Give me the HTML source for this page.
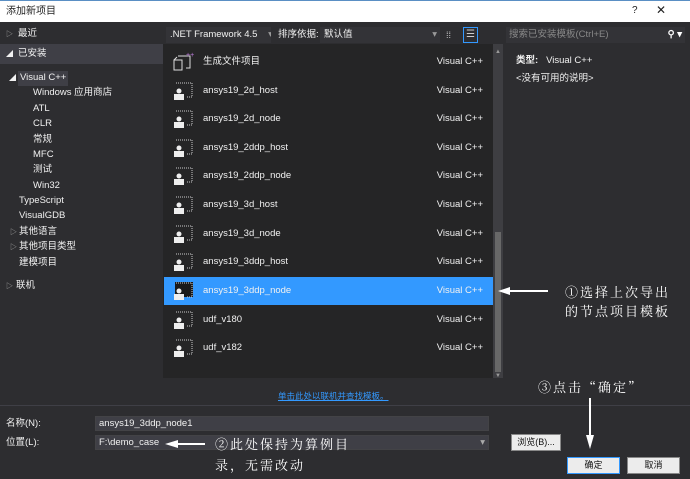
<!DOCTYPE html><html><head><meta charset="utf-8"><style>
*{margin:0;padding:0;box-sizing:border-box}
body{width:690px;height:479px;background:#2d2d30;font-family:"Liberation Sans","Noto Sans CJK SC",sans-serif;font-size:9.5px;color:#f1f1f1;position:relative;overflow:hidden;line-height:12px}
.a{position:absolute;white-space:nowrap}
.title{left:0;top:0;width:690px;height:22px;background:#fff;border-top:1px solid #5a8fc4;color:#222;font-size:10px}
.list{left:163px;top:44px;width:330px;height:334px;background:#252526}
.row{position:absolute;left:1px;width:329px;height:28px}
.row .n{position:absolute;left:39px;top:8px}
.row .t{position:absolute;right:10px;top:8px}
.ic{position:absolute;left:8px;top:4px;width:22px;height:20px}
.sel{background:#3399ff}
.ann{font-family:"Noto Serif CJK SC","Liberation Serif",serif;font-size:13px;color:#fff;letter-spacing:2px;line-height:16px}
.btn{position:absolute;background:#ececec;color:#111;text-align:center;font-size:9px;line-height:15px;border:1px solid #888}
.inp{position:absolute;background:#3f3f46;border:1px solid #434346;color:#f1f1f1;padding-left:3px;line-height:13px;overflow:hidden}
.box{height:16px;overflow:hidden;background:#333337;padding:2px 4px}
</style></head><body>
<div class="a title"><span style="position:absolute;left:6px;top:5px">添加新项目</span><span style="position:absolute;left:632px;top:4px">?</span><span style="position:absolute;left:656px;top:3px;font-size:12px">✕</span></div>

<div class="a" style="left:0;top:44px;width:163px;height:20px;background:#3f3f46"></div>
<div class="a" style="left:18px;top:71px;width:50px;height:15px;background:#3f3f46"></div>
<div class="a" style="left:6px;top:29px;color:#aaa;font-size:7px">▷</div><div class="a" style="left:18px;top:28px">最近</div>
<div class="a" style="left:6px;top:49px;font-size:7px">◢</div><div class="a" style="left:18px;top:48px">已安装</div>
<div class="a" style="left:9px;top:73px;font-size:7px">◢</div><div class="a" style="left:20px;top:72px">Visual C++</div>
<div class="a" style="left:33px;top:87px">Windows 应用商店</div>
<div class="a" style="left:33px;top:103px">ATL</div>
<div class="a" style="left:33px;top:118px">CLR</div>
<div class="a" style="left:33px;top:134px">常规</div>
<div class="a" style="left:33px;top:149px">MFC</div>
<div class="a" style="left:33px;top:164px">测试</div>
<div class="a" style="left:33px;top:180px">Win32</div>
<div class="a" style="left:19px;top:195px">TypeScript</div>
<div class="a" style="left:19px;top:210px">VisualGDB</div>
<div class="a" style="left:10px;top:227px;color:#aaa;font-size:7px">▷</div><div class="a" style="left:19px;top:226px">其他语言</div>
<div class="a" style="left:10px;top:242px;color:#aaa;font-size:7px">▷</div><div class="a" style="left:19px;top:241px">其他项目类型</div>
<div class="a" style="left:19px;top:257px">建模项目</div>
<div class="a" style="left:6px;top:281px;color:#aaa;font-size:7px">▷</div><div class="a" style="left:16px;top:280px">联机</div>

<div class="a box" style="left:166px;top:27px;width:105px">.NET Framework 4.5 <span style="color:#999;margin-left:8px">▾</span></div>
<div class="a" style="left:278px;top:29px">排序依据:</div>
<div class="a box" style="left:320px;top:27px;width:120px">默认值<span style="position:absolute;right:3px;color:#999">▾</span></div>
<div class="a" style="left:446px;top:29px;width:12px;height:12px;color:#ccc;font-size:9px">⁞⁞</div>
<div class="a" style="left:463px;top:27px;width:15px;height:16px;border:1px solid #3399ff;color:#ccc;font-size:10px;text-align:center;line-height:14px">☰</div>
<div class="a box" style="left:506px;top:27px;width:179px;color:#888;padding:2px 3px">搜索已安装模板(Ctrl+E)<span style="position:absolute;right:3px;color:#fff;font-weight:bold">⚲ ▾</span></div>

<div class="a list">
<div class="row" style="top:4px"><svg class="ic" viewBox="0 0 22 20"><path d="M2 8h8v10H2z M2 8l3-3" fill="none" stroke="#ddd"/><path d="M6 4h12v12h-4" fill="none" stroke="#ddd"/><text x="14" y="5" font-size="7" fill="#c07ee0">++</text></svg><span class="n">生成文件项目</span><span class="t">Visual C++</span></div>
<div class="row" style="top:33px"><svg class="ic" viewBox="0 0 22 20"><path d="M4 2h16v14h-6" fill="none" stroke="#ccc" stroke-dasharray="1 1"/><circle cx="7" cy="10" r="2.5" fill="#eee"/><rect x="2" y="13" width="10" height="6" fill="#eee"/></svg><span class="n">ansys19_2d_host</span><span class="t">Visual C++</span></div>
<div class="row" style="top:61px"><svg class="ic" viewBox="0 0 22 20"><path d="M4 2h16v14h-6" fill="none" stroke="#ccc" stroke-dasharray="1 1"/><circle cx="7" cy="10" r="2.5" fill="#eee"/><rect x="2" y="13" width="10" height="6" fill="#eee"/></svg><span class="n">ansys19_2d_node</span><span class="t">Visual C++</span></div>
<div class="row" style="top:90px"><svg class="ic" viewBox="0 0 22 20"><path d="M4 2h16v14h-6" fill="none" stroke="#ccc" stroke-dasharray="1 1"/><circle cx="7" cy="10" r="2.5" fill="#eee"/><rect x="2" y="13" width="10" height="6" fill="#eee"/></svg><span class="n">ansys19_2ddp_host</span><span class="t">Visual C++</span></div>
<div class="row" style="top:118px"><svg class="ic" viewBox="0 0 22 20"><path d="M4 2h16v14h-6" fill="none" stroke="#ccc" stroke-dasharray="1 1"/><circle cx="7" cy="10" r="2.5" fill="#eee"/><rect x="2" y="13" width="10" height="6" fill="#eee"/></svg><span class="n">ansys19_2ddp_node</span><span class="t">Visual C++</span></div>
<div class="row" style="top:147px"><svg class="ic" viewBox="0 0 22 20"><path d="M4 2h16v14h-6" fill="none" stroke="#ccc" stroke-dasharray="1 1"/><circle cx="7" cy="10" r="2.5" fill="#eee"/><rect x="2" y="13" width="10" height="6" fill="#eee"/></svg><span class="n">ansys19_3d_host</span><span class="t">Visual C++</span></div>
<div class="row" style="top:176px"><svg class="ic" viewBox="0 0 22 20"><path d="M4 2h16v14h-6" fill="none" stroke="#ccc" stroke-dasharray="1 1"/><circle cx="7" cy="10" r="2.5" fill="#eee"/><rect x="2" y="13" width="10" height="6" fill="#eee"/></svg><span class="n">ansys19_3d_node</span><span class="t">Visual C++</span></div>
<div class="row" style="top:204px"><svg class="ic" viewBox="0 0 22 20"><path d="M4 2h16v14h-6" fill="none" stroke="#ccc" stroke-dasharray="1 1"/><circle cx="7" cy="10" r="2.5" fill="#eee"/><rect x="2" y="13" width="10" height="6" fill="#eee"/></svg><span class="n">ansys19_3ddp_host</span><span class="t">Visual C++</span></div>
<div class="row sel" style="top:233px"><svg class="ic" viewBox="0 0 22 20"><rect x="3" y="1" width="18" height="15" fill="#1a1a1a"/><path d="M4 2h16v14h-6" fill="none" stroke="#ccc" stroke-dasharray="1 1"/><circle cx="7" cy="10" r="2.5" fill="#eee"/><rect x="2" y="13" width="10" height="6" fill="#eee"/></svg><span class="n">ansys19_3ddp_node</span><span class="t">Visual C++</span></div>
<div class="row" style="top:262px"><svg class="ic" viewBox="0 0 22 20"><path d="M4 2h16v14h-6" fill="none" stroke="#ccc" stroke-dasharray="1 1"/><circle cx="7" cy="10" r="2.5" fill="#eee"/><rect x="2" y="13" width="10" height="6" fill="#eee"/></svg><span class="n">udf_v180</span><span class="t">Visual C++</span></div>
<div class="row" style="top:290px"><svg class="ic" viewBox="0 0 22 20"><path d="M4 2h16v14h-6" fill="none" stroke="#ccc" stroke-dasharray="1 1"/><circle cx="7" cy="10" r="2.5" fill="#eee"/><rect x="2" y="13" width="10" height="6" fill="#eee"/></svg><span class="n">udf_v182</span><span class="t">Visual C++</span></div>
</div>
<div class="a" style="left:493px;top:44px;width:10px;height:334px;background:#3e3e42"></div>
<div class="a" style="left:495px;top:232px;width:6px;height:140px;background:#686868"></div>
<div class="a" style="left:495px;top:46px;color:#999;font-size:6px">▲</div>
<div class="a" style="left:495px;top:370px;color:#999;font-size:6px">▼</div>

<div class="a" style="left:516px;top:55px"><b>类型:</b>&nbsp;&nbsp; Visual C++</div>
<div class="a" style="left:516px;top:73px">&lt;没有可用的说明&gt;</div>

<div class="a" style="left:278px;top:390px;color:#3399ff;text-decoration:underline;font-size:8.5px">单击此处以联机并查找模板。</div>

<div class="a" style="left:0;top:405px;width:690px;height:74px;background:#2d2d30;border-top:1px solid #3f3f46"></div>
<div class="a" style="left:6px;top:418px">名称(N):</div>
<div class="inp" style="left:95px;top:416px;width:394px;height:15px">ansys19_3ddp_node1</div>
<div class="a" style="left:6px;top:437px">位置(L):</div>
<div class="inp" style="left:95px;top:435px;width:394px;height:15px">F:\demo_case<span style="position:absolute;right:3px;color:#aaa">▾</span></div>
<div class="btn" style="left:511px;top:434px;width:50px;height:17px">浏览(B)...</div>
<div class="btn" style="left:567px;top:457px;width:53px;height:17px;border:1px solid #3399ff">确定</div>
<div class="btn" style="left:627px;top:457px;width:53px;height:17px">取消</div>

<div class="a ann" style="left:565px;top:284px">①选择上次导出</div>
<div class="a ann" style="left:565px;top:303px">的节点项目模板</div>
<div class="a ann" style="left:538px;top:379px">③点击“确定”</div>
<div class="a ann" style="left:215px;top:436px">②此处保持为算例目</div>
<div class="a ann" style="left:215px;top:457px">录，无需改动</div>
<svg class="a" style="left:0;top:0" width="690" height="479"><g fill="#fff" stroke="#fff" stroke-width="2"><line x1="510" y1="291" x2="548" y2="291"/><path d="M498 291l12-4v8z" stroke="none"/><line x1="178" y1="444" x2="205" y2="444"/><path d="M165 444l13-4v8z" stroke="none"/><line x1="590" y1="398" x2="590" y2="436"/><path d="M590 449l-4-14h8z" stroke="none"/></g></svg>
</body></html>
